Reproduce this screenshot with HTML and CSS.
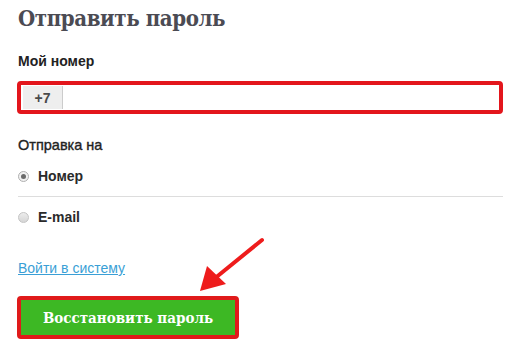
FILE: index.html
```html
<!DOCTYPE html>
<html lang="ru">
<head>
<meta charset="utf-8">
<title>Отправить пароль</title>
<link rel="stylesheet" href="styles.css">
</head>
<body>
<div class="page">
  <h1 class="title">Отправить пароль</h1>
  <div class="label">Мой номер</div>
  <div class="phone-field">
    <span class="prefix">+7</span>
    <span class="phone-input"></span>
  </div>
  <div class="label label-send">Отправка на</div>
  <div class="radio-row">
    <span class="radio radio-checked"></span>
    <span class="radio-text">Номер</span>
  </div>
  <div class="divider"></div>
  <div class="radio-row radio-row-email">
    <span class="radio"></span>
    <span class="radio-text">E-mail</span>
  </div>
  <a class="login-link" href="#">Войти в систему</a>
  <div class="btn-frame">
    <span class="btn">Восстановить пароль</span>
  </div>
  <svg class="arrow" width="523" height="354" viewBox="0 0 523 354">
    <line x1="262" y1="240" x2="214" y2="279" stroke="#ee1c1c" stroke-width="4" stroke-linecap="round"/>
    <polygon points="200,291 207,266 226,284" fill="#ee1c1c"/>
  </svg>
</div>
</body>
</html>
```
FILE: styles.css
```css
html, body {
  margin: 0;
  padding: 0;
  background: #ffffff;
}

.page {
  position: relative;
  width: 523px;
  height: 354px;
  padding: 0 20px 0 18px;
  box-sizing: border-box;
  font-family: "Liberation Sans", Arial, sans-serif;
  color: #222222;
  display: flex;
  flex-direction: column;
  align-items: flex-start;
  overflow: hidden;
}

.title {
  margin: 3px 0 0 0;
  font-family: "DejaVu Serif Condensed", "DejaVu Serif", serif;
  font-weight: bold;
  font-size: 22px;
  line-height: 30px;
  color: #4b4b53;
  letter-spacing: -0.4px;
}

.label {
  margin-top: 20px;
  font-size: 14px;
  font-weight: bold;
  line-height: 16px;
  color: #222222;
}

.phone-field {
  margin-top: 12px;
  margin-left: -1px;
  width: 486px;
  height: 33px;
  box-sizing: border-box;
  border: 4px solid #e3161c;
  border-radius: 4px;
  padding: 1px 1px 1px 2px;
  display: flex;
  background: #ffffff;
}

.prefix {
  width: 39px;
  flex: none;
  background: #eeeeee;
  border-right: 1px solid #cccccc;
  display: flex;
  align-items: center;
  justify-content: center;
  font-size: 14px;
  font-weight: bold;
  color: #4a4a4a;
}

.phone-input {
  flex: 1;
}

.label-send {
  margin-top: 23px;
  font-size: 14.5px;
  font-weight: normal;
  -webkit-text-stroke: 0.35px #222222;
}

.radio-row {
  margin-top: 12px;
  height: 22px;
  display: flex;
  align-items: center;
  gap: 9px;
}

.radio-row-email {
  margin-top: 9px;
}

.radio {
  width: 11px;
  height: 11px;
  box-sizing: border-box;
  border-radius: 50%;
  border: 1px solid #c4c4c4;
  background: linear-gradient(#ececec, #d6d6d6);
  position: relative;
}

.radio-checked {
  background: #f0f0f0;
  border-color: #b0b0b0;
}

.radio-checked::after {
  content: "";
  position: absolute;
  left: 2px;
  top: 2px;
  width: 5px;
  height: 5px;
  border-radius: 50%;
  background: #6a6a6a;
}

.radio-text {
  font-size: 14px;
  font-weight: bold;
  color: #2a2a2a;
}

.divider {
  margin-top: 9px;
  width: 485px;
  height: 1px;
  background: #dddddd;
}

.login-link {
  margin-top: 32px;
  font-size: 14px;
  line-height: 16px;
  color: #3a9fd6;
  text-decoration: underline;
}

.btn-frame {
  margin-top: 20px;
  margin-left: -1px;
  width: 222px;
  height: 43px;
  box-sizing: border-box;
  border: 4px solid #e01a1a;
  border-radius: 4px;
  background: #3db824;
  display: flex;
  align-items: center;
  justify-content: center;
}

.btn {
  font-family: "DejaVu Serif Condensed", "DejaVu Serif", serif;
  font-weight: bold;
  font-size: 15px;
  color: #ffffff;
}

.arrow {
  position: absolute;
  left: 0;
  top: 0;
  pointer-events: none;
}
```
